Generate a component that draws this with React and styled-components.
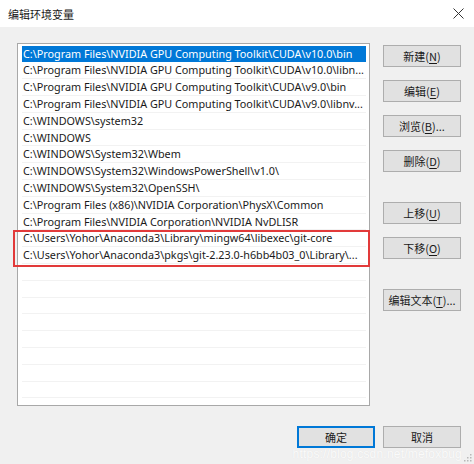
import React from 'react';
import styled, { createGlobalStyle } from 'styled-components';

const GlobalStyle = createGlobalStyle`
    html, body {
        margin: 0;
        padding: 0;
        background: #f0f0f0;
    }
    #root {
        width: 474px;
        height: 464px;
    }
`;

const Window = styled.div`
    width: 474px;
    height: 464px;
    display: flex;
    flex-direction: column;
    font-family: "Noto Sans CJK SC", "Noto Sans", sans-serif;
    font-size: 11px;
    color: #000;
    overflow: hidden;
    position: relative;
`;

const TitleBar = styled.div`
    height: 27px;
    flex: none;
    background: #ffffff;
    display: flex;
    align-items: center;
    justify-content: space-between;
    padding: 0 10px 0 8px;
    box-sizing: border-box;
`;

const Title = styled.span`
    font-size: 11px;
    color: #1a1a1a;
`;

const CloseIcon = styled.svg`
    width: 11px;
    height: 11px;
    display: block;
`;

const Body = styled.div`
    flex: 1;
    background: #f0f0f0;
    display: flex;
    flex-direction: column;
    padding: 16px 13px 0 17px;
    box-sizing: border-box;
    position: relative;
`;

const Content = styled.div`
    display: flex;
    gap: 13px;
`;

const ListBox = styled.div`
    width: 353px;
    height: 363px;
    box-sizing: border-box;
    border: 1px solid #a8a8a8;
    background: #ffffff;
    padding: 1.6px 3px 0 4px;
    overflow: hidden;
`;

const Row = styled.div`
    height: 16.8px;
    box-sizing: border-box;
    padding-left: 1px;
    line-height: 16px;
    white-space: nowrap;
    overflow: hidden;
    font-family: "Noto Sans", sans-serif;
    font-size: 10.8px;
    color: ${p => (p.$selected ? '#ffffff' : '#1a1a1a')};
    background: ${p => (p.$selected ? '#0078d7' : 'transparent')};
    border-bottom: 1px solid ${p => (p.$selected ? '#0078d7' : '#f2f2f2')};
`;

const ButtonColumn = styled.div`
    display: flex;
    flex-direction: column;
    gap: 30px;
    padding-top: 2px;
`;

const ButtonGroup = styled.div`
    display: flex;
    flex-direction: column;
    gap: 13px;
`;

const Button = styled.button`
    width: 78px;
    height: 22px;
    box-sizing: border-box;
    background: #e1e1e1;
    border: 1px solid ${p => (p.$primary ? '#0078d7' : '#adadad')};
    box-shadow: ${p => (p.$primary ? 'inset 0 0 0 1px #0078d7' : 'none')};
    font-family: "Noto Sans CJK SC", sans-serif;
    font-size: 11px;
    color: #1a1a1a;
    padding: 0;
    display: flex;
    align-items: center;
    justify-content: center;

    u {
        text-decoration-thickness: 1px;
        text-underline-offset: 2px;
    }
`;

const Footer = styled.div`
    display: flex;
    justify-content: flex-end;
    gap: 8px;
    margin-top: 20px;
`;

const Highlight = styled.div`
    position: absolute;
    left: 13px;
    top: 203px;
    width: 357px;
    height: 37px;
    box-sizing: border-box;
    border: 2px solid #e23a3a;
    pointer-events: none;
`;

const Watermark = styled.div`
    position: absolute;
    right: 12px;
    bottom: 3px;
    font-family: "Liberation Sans", sans-serif;
    font-size: 12px;
    color: rgba(255, 255, 255, 0.85);
    text-shadow: 0 0 1px rgba(0, 0, 0, 0.08);
    letter-spacing: 0.2px;
`;

const Grip = styled.svg`
    position: absolute;
    right: 2px;
    bottom: 2px;
    width: 9px;
    height: 9px;
`;

const paths = [
    'C:\\Program Files\\NVIDIA GPU Computing Toolkit\\CUDA\\v10.0\\bin',
    'C:\\Program Files\\NVIDIA GPU Computing Toolkit\\CUDA\\v10.0\\libn...',
    'C:\\Program Files\\NVIDIA GPU Computing Toolkit\\CUDA\\v9.0\\bin',
    'C:\\Program Files\\NVIDIA GPU Computing Toolkit\\CUDA\\v9.0\\libnv...',
    'C:\\WINDOWS\\system32',
    'C:\\WINDOWS',
    'C:\\WINDOWS\\System32\\Wbem',
    'C:\\WINDOWS\\System32\\WindowsPowerShell\\v1.0\\',
    'C:\\WINDOWS\\System32\\OpenSSH\\',
    'C:\\Program Files (x86)\\NVIDIA Corporation\\PhysX\\Common',
    'C:\\Program Files\\NVIDIA Corporation\\NVIDIA NvDLISR',
    'C:\\Users\\Yohor\\Anaconda3\\Library\\mingw64\\libexec\\git-core',
    'C:\\Users\\Yohor\\Anaconda3\\pkgs\\git-2.23.0-h6bb4b03_0\\Library\\...',
];

const rows = [...paths, ...Array(10).fill('')];

export default function App() {
    return (
        <>
            <GlobalStyle />
            <Window>
                <TitleBar>
                    <Title>编辑环境变量</Title>
                    <CloseIcon viewBox="0 0 11 11">
                        <path d="M0.5 0.5 L10.5 10.5 M10.5 0.5 L0.5 10.5" stroke="#333" strokeWidth="1" fill="none" />
                    </CloseIcon>
                </TitleBar>
                <Body>
                    <Content>
                        <ListBox>
                            {rows.map((text, i) => (
                                <Row key={i} $selected={i === 0}>{text}</Row>
                            ))}
                        </ListBox>
                        <ButtonColumn>
                            <ButtonGroup>
                                <Button>新建(<u>N</u>)</Button>
                                <Button>编辑(<u>E</u>)</Button>
                                <Button>浏览(<u>B</u>)...</Button>
                                <Button>删除(<u>D</u>)</Button>
                            </ButtonGroup>
                            <ButtonGroup>
                                <Button>上移(<u>U</u>)</Button>
                                <Button>下移(<u>O</u>)</Button>
                            </ButtonGroup>
                            <ButtonGroup>
                                <Button>编辑文本(<u>T</u>)...</Button>
                            </ButtonGroup>
                        </ButtonColumn>
                    </Content>
                    <Footer>
                        <Button $primary>确定</Button>
                        <Button>取消</Button>
                    </Footer>
                    <Highlight />
                </Body>
                <Watermark>https://blog.csdn.net/mefoxbug</Watermark>
                <Grip viewBox="0 0 9 9">
                    <g fill="#b8b8b8">
                        <rect x="7" y="1" width="1.5" height="1.5" />
                        <rect x="4" y="4" width="1.5" height="1.5" />
                        <rect x="7" y="4" width="1.5" height="1.5" />
                        <rect x="1" y="7" width="1.5" height="1.5" />
                        <rect x="4" y="7" width="1.5" height="1.5" />
                        <rect x="7" y="7" width="1.5" height="1.5" />
                    </g>
                </Grip>
            </Window>
        </>
    );
}
